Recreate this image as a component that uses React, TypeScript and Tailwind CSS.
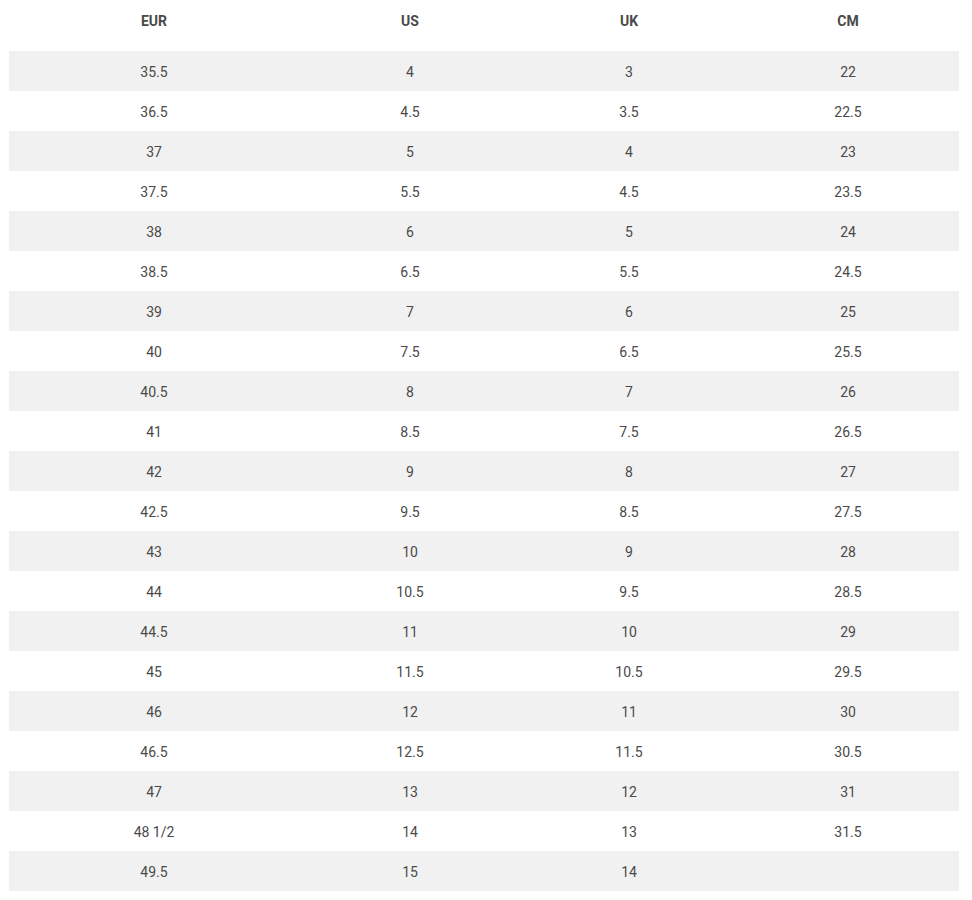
const rows: string[][] = [
  ["35.5", "4", "3", "22"],
  ["36.5", "4.5", "3.5", "22.5"],
  ["37", "5", "4", "23"],
  ["37.5", "5.5", "4.5", "23.5"],
  ["38", "6", "5", "24"],
  ["38.5", "6.5", "5.5", "24.5"],
  ["39", "7", "6", "25"],
  ["40", "7.5", "6.5", "25.5"],
  ["40.5", "8", "7", "26"],
  ["41", "8.5", "7.5", "26.5"],
  ["42", "9", "8", "27"],
  ["42.5", "9.5", "8.5", "27.5"],
  ["43", "10", "9", "28"],
  ["44", "10.5", "9.5", "28.5"],
  ["44.5", "11", "10", "29"],
  ["45", "11.5", "10.5", "29.5"],
  ["46", "12", "11", "30"],
  ["46.5", "12.5", "11.5", "30.5"],
  ["47", "13", "12", "31"],
  ["48 1/2", "14", "13", "31.5"],
  ["49.5", "15", "14", ""],
];

const cols = "grid grid-cols-[290px_222px_216px_222px]";

export default function App() {
  return (
    <div className="bg-white min-h-[900px] px-[9px] font-['Roboto',sans-serif] text-[14px] text-[#4a4a4a]">
      <div className="w-[950px]">
        <div className={`${cols} h-[51px] pt-[11px] font-bold`}>
          {["EUR", "US", "UK", "CM"].map((h) => (
            <div key={h} className="text-center leading-5">{h}</div>
          ))}
        </div>
        {rows.map((r, i) => (
          <div key={i} className={`${cols} h-10 pt-[2px] items-center ${i % 2 === 0 ? "bg-[#f1f1f1]" : "bg-white"}`}>
            {r.map((c, j) => (
              <div key={j} className="text-center leading-5">{c}</div>
            ))}
          </div>
        ))}
      </div>
    </div>
  );
}
